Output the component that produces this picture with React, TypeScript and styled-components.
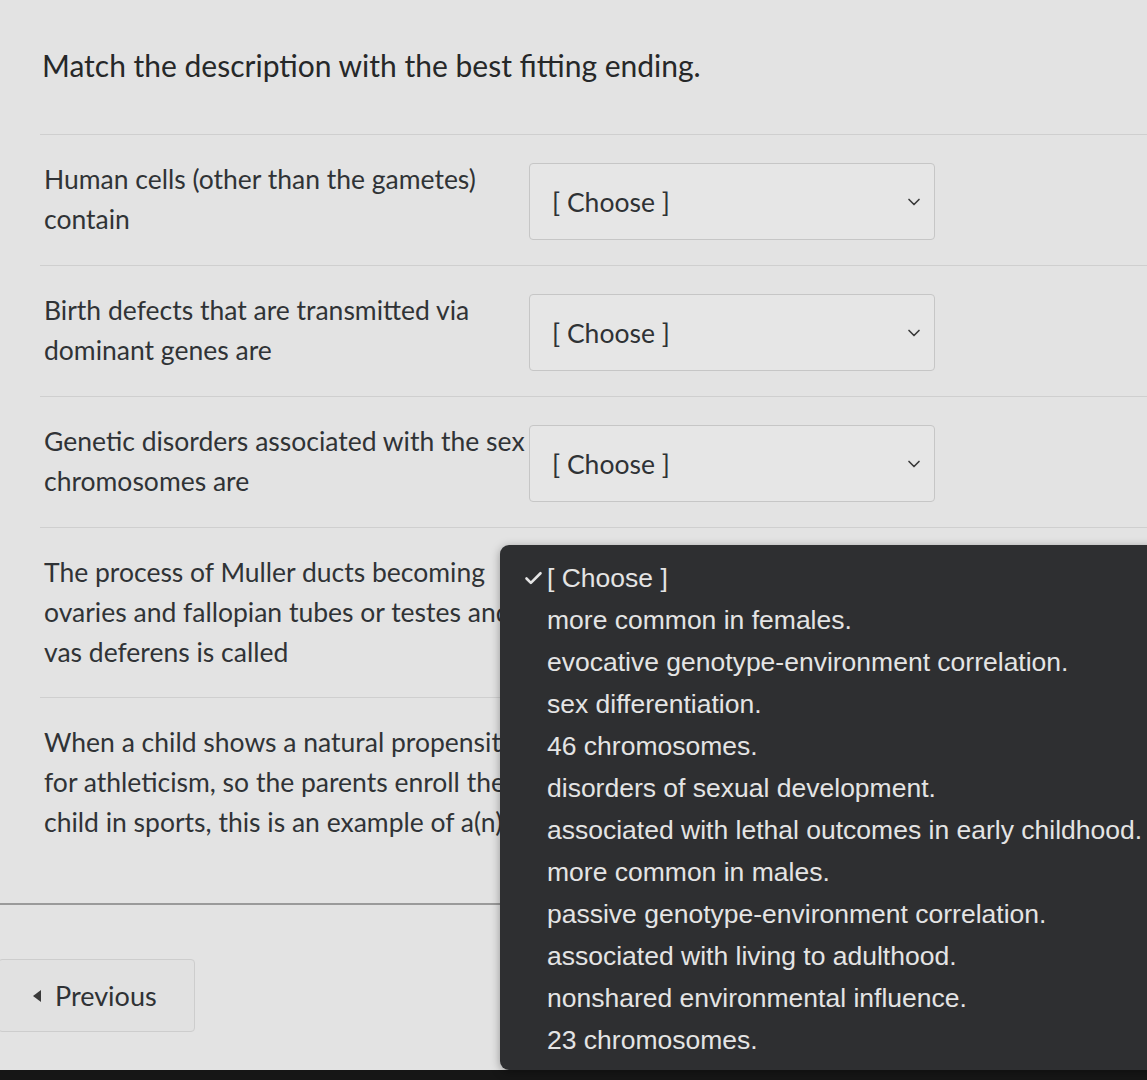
import React from "react";
import styled, { createGlobalStyle } from "styled-components";
import { ChevronDown, Check as CheckIcon } from "lucide-react";

const GlobalStyle = createGlobalStyle`
  html, body {
    margin: 0;
    padding: 0;
    background: #e3e3e3;
    overflow: hidden;
  }
  * { box-sizing: border-box; }
`;

const Page = styled.div`
  position: relative;
  width: 1147px;
  height: 1080px;
  overflow: hidden;
  background: #e3e3e3;
  display: flex;
  flex-direction: column;
  font-family: Lato, "Noto Sans", sans-serif;
  color: #2f3235;
`;

const Quiz = styled.section`
  margin-left: 40px;
  display: flex;
  flex-direction: column;
`;

const Title = styled.h1`
  margin: 0;
  padding: 44px 0 0 2px;
  height: 135px;
  font-size: 30px;
  line-height: 42px;
  font-weight: 400;
  color: #262829;
  border-bottom: 1px solid #cfcfcf;
`;

const Row = styled.div<{ $last?: boolean }>`
  display: grid;
  grid-template-columns: 481px 406px;
  column-gap: 4px;
  align-items: start;
  padding: 24px 0 25px 4px;
  border-bottom: ${(p) => (p.$last ? "none" : "1px solid #cfcfcf")};
`;

const Prompt = styled.div`
  font-size: 26.5px;
  line-height: 40px;
  color: #303336;
`;

const Select = styled.div`
  height: 77px;
  margin-top: 4px;
  display: flex;
  align-items: center;
  justify-content: space-between;
  padding: 0 10px 0 22px;
  border: 1px solid #c6c6c6;
  border-radius: 4px;
  background: #e6e6e6;
  font-size: 26.5px;
  color: #2f3235;
`;

const Footer = styled.footer`
  margin-top: 36px;
  border-top: 2px solid #9a9a9a;
  padding-top: 54px;
  display: flex;
  flex: 1;
  align-items: flex-start;
`;

const PrevButton = styled.button`
  width: 197px;
  height: 73px;
  margin-left: -2px;
  display: flex;
  align-items: center;
  gap: 14px;
  padding: 0 0 0 34px;
  border: 1px solid #cdcdcd;
  border-radius: 4px;
  background: #e1e1e1;
  font-family: Lato, "Noto Sans", sans-serif;
  font-size: 27px;
  color: #2f3235;
`;

const Triangle = styled.span`
  width: 0;
  height: 0;
  border-top: 6px solid transparent;
  border-bottom: 6px solid transparent;
  border-right: 8px solid #3a3a3a;
`;

const Bezel = styled.div`
  height: 10px;
  background: #161616;
`;

const Menu = styled.ul`
  position: absolute;
  left: 500px;
  top: 545px;
  width: 680px;
  margin: 0;
  padding: 12px 0 9px 0;
  list-style: none;
  background: #2e2f31;
  border-radius: 9px;
  box-shadow: 0 2px 10px rgba(0, 0, 0, 0.35);
  font-family: "Liberation Sans", Arial, sans-serif;
  font-size: 26.5px;
  color: #e4e4e4;
  z-index: 2;
`;

const MenuItem = styled.li`
  position: relative;
  height: 42px;
  line-height: 42px;
  padding-left: 47px;
  white-space: nowrap;
`;

const Check = styled.span`
  position: absolute;
  left: 23px;
  top: 11px;
  display: flex;
`;

const questions = [
  "Human cells (other than the gametes) contain",
  "Birth defects that are transmitted via dominant genes are",
  "Genetic disorders associated with the sex chromosomes are",
  "The process of Muller ducts becoming ovaries and fallopian tubes or testes and vas deferens is called",
  "When a child shows a natural propensity for athleticism, so the parents enroll the child in sports, this is an example of a(n)",
];

const options = [
  "[ Choose ]",
  "more common in females.",
  "evocative genotype-environment correlation.",
  "sex differentiation.",
  "46 chromosomes.",
  "disorders of sexual development.",
  "associated with lethal outcomes in early childhood.",
  "more common in males.",
  "passive genotype-environment correlation.",
  "associated with living to adulthood.",
  "nonshared environmental influence.",
  "23 chromosomes.",
];

export default function App() {
  return (
    <Page>
      <GlobalStyle />
      <Quiz>
        <Title>Match the description with the best fitting ending.</Title>
        {questions.map((q, i) => (
          <Row key={i} $last={i === questions.length - 1}>
            <Prompt>{q}</Prompt>
            <Select>
              <span>[ Choose ]</span>
              <ChevronDown size={20} strokeWidth={2} color="#3a3a3a" />
            </Select>
          </Row>
        ))}
      </Quiz>
      <Footer>
        <PrevButton>
          <Triangle />
          Previous
        </PrevButton>
      </Footer>
      <Bezel />
      <Menu>
        {options.map((o, i) => (
          <MenuItem key={i}>
            {i === 0 && (
              <Check>
                <CheckIcon size={21} strokeWidth={3} color="#e4e4e4" />
              </Check>
            )}
            {o}
          </MenuItem>
        ))}
      </Menu>
    </Page>
  );
}
